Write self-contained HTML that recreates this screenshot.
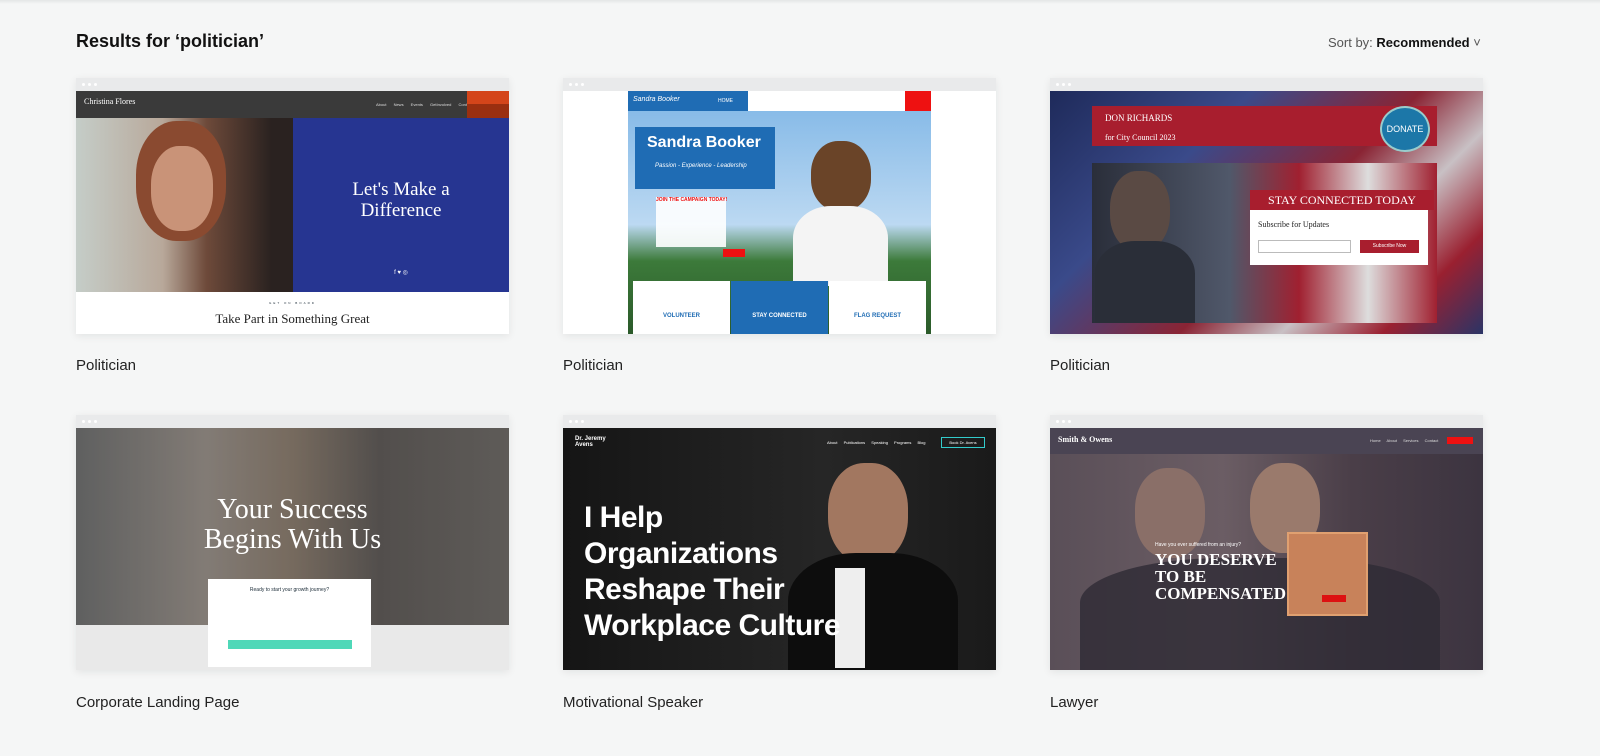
<!DOCTYPE html>
<html><head><meta charset="utf-8"><style>
*{margin:0;padding:0;box-sizing:border-box}
body{width:1600px;height:756px;background:#f5f6f6;font-family:"Liberation Sans",sans-serif;position:relative;overflow:hidden;color:#20303c}
.a{position:absolute}
.card{position:absolute;width:433px;box-shadow:0 2px 8px rgba(0,0,0,.08)}
.bar{height:13px;background:#e9eaeb;position:relative}
.bar i{position:absolute;top:5px;width:3px;height:3px;border-radius:50%;background:#fff}
.img{position:relative;overflow:hidden}
.lbl{position:absolute;font-size:15px;color:#222}
.serif{font-family:"Liberation Serif",serif}
</style></head><body>
<div style="position:absolute;top:0;left:0;width:1600px;height:4px;background:linear-gradient(#e4e6e6,#f5f6f6)"></div>
<div class="a" style="left:76px;top:31px;font-size:18px;font-weight:bold;color:#111">Results for ‘politician’</div>
<div class="a" style="left:1328px;top:35px;font-size:13px;color:#555">Sort by: <b style="color:#111">Recommended</b> ˅</div>

<!-- Card 1 -->
<div class="card" style="left:76px;top:78px"><div class="bar"><i style="left:6px"></i><i style="left:12px"></i><i style="left:18px"></i></div>
<div class="img" style="height:243px;background:#fff">
<div class="a" style="left:0;top:0;width:433px;height:27px;background:#3a3a3a"></div>
<div class="a serif" style="left:8px;top:6px;color:#fff;font-size:8px">Christina Flores</div>
<div class="a" style="left:300px;top:11px;color:#ddd;font-size:4px;word-spacing:6px">About News Events GetInvolved Contact</div>
<div class="a" style="left:391px;top:0;width:42px;height:13px;background:#d4451a"></div>
<div class="a" style="left:391px;top:13px;width:42px;height:14px;background:#9a2f10"></div>
<div class="a" style="left:0;top:27px;width:217px;height:174px;background:linear-gradient(90deg,#c5cdc8,#b8a89a 40%,#6e4a3a 60%,#2a2220 90%)"></div>
<div class="a" style="left:60px;top:30px;width:90px;height:120px;border-radius:45%;background:#8a4a30"></div>
<div class="a" style="left:75px;top:55px;width:62px;height:85px;border-radius:45%;background:#c99378"></div>
<div class="a" style="left:217px;top:27px;width:216px;height:174px;background:#263591"></div>
<div class="a serif" style="left:217px;top:88px;width:216px;text-align:center;color:#fff;font-size:19px;line-height:21px">Let's Make a<br>Difference</div>
<div class="a" style="left:217px;top:178px;width:216px;text-align:center;color:#fff;font-size:6px">f ♥ ◎</div>
<div class="a" style="left:0;top:210px;width:433px;text-align:center;font-size:3px;letter-spacing:2px">GET ON BOARD</div>
<div class="a serif" style="left:0;top:220px;width:433px;text-align:center;font-size:13px;color:#222">Take Part in Something Great</div>
</div></div>
<div class="lbl" style="left:76px;top:357px">Politician</div>

<!-- Card 2 -->
<div class="card" style="left:563px;top:78px"><div class="bar"><i style="left:6px"></i><i style="left:12px"></i><i style="left:18px"></i></div>
<div class="img" style="height:243px;background:#fff">
<div class="a" style="left:65px;top:0;width:303px;height:243px;background:linear-gradient(#7fb6e6,#bcd9f2 55%,#3c7a3a 70%,#2b5a2a)"></div>
<div class="a" style="left:65px;top:0;width:303px;height:20px;background:#1f6cb4"></div>
<div class="a" style="left:140px;top:0;width:228px;height:20px;background:#fff"></div>
<div class="a" style="left:342px;top:0;width:26px;height:20px;background:#e11"></div>
<div class="a" style="left:140px;top:0;width:45px;height:20px;background:#1f6cb4;color:#fff;font-size:5px;text-align:center;line-height:20px">HOME</div>
<div class="a" style="left:70px;top:5px;color:#fff;font-size:7px;font-style:italic">Sandra Booker</div>
<div class="a" style="left:72px;top:36px;width:140px;height:62px;background:#1f6cb4"></div>
<div class="a" style="left:84px;top:43px;color:#fff;font-size:16px;font-weight:bold">Sandra Booker</div>
<div class="a" style="left:92px;top:72px;color:#fff;font-size:6px;font-style:italic">Passion - Experience - Leadership</div>
<div class="a" style="left:93px;top:106px;width:70px;height:50px;background:#fff;opacity:.9"></div>
<div class="a" style="left:93px;top:106px;color:#e11;font-size:5px;font-weight:bold">JOIN THE CAMPAIGN TODAY!</div>
<div class="a" style="left:160px;top:158px;width:22px;height:8px;background:#e11"></div>
<div class="a" style="left:248px;top:50px;width:60px;height:70px;border-radius:45%;background:#6a4428"></div>
<div class="a" style="left:230px;top:115px;width:95px;height:80px;border-radius:40% 40% 0 0;background:#f4f4f4"></div>
<div class="a" style="left:70px;top:190px;width:97px;height:53px;background:#fff"></div>
<div class="a" style="left:168px;top:190px;width:97px;height:53px;background:#1f6cb4"></div>
<div class="a" style="left:266px;top:190px;width:97px;height:53px;background:#fff"></div>
<div class="a" style="left:70px;top:222px;width:97px;text-align:center;color:#1f6cb4;font-size:6px;font-weight:bold">VOLUNTEER</div>
<div class="a" style="left:168px;top:222px;width:97px;text-align:center;color:#fff;font-size:6px;font-weight:bold">STAY CONNECTED</div>
<div class="a" style="left:266px;top:222px;width:97px;text-align:center;color:#1f6cb4;font-size:6px;font-weight:bold">FLAG REQUEST</div>
</div></div>
<div class="lbl" style="left:563px;top:357px">Politician</div>

<!-- Card 3 -->
<div class="card" style="left:1050px;top:78px"><div class="bar"><i style="left:6px"></i><i style="left:12px"></i><i style="left:18px"></i></div>
<div class="img" style="height:243px;background:linear-gradient(135deg,#1e2a5a,#3a4a8a 30%,#8a2434 55%,#c8c0c4 70%,#9a2030 85%,#2a3466)">
<div class="a" style="left:42px;top:15px;width:345px;height:40px;background:#a81e2e"></div>
<div class="a serif" style="left:55px;top:22px;color:#fff;font-size:9px">DON RICHARDS</div>
<div class="a serif" style="left:55px;top:42px;color:#fff;font-size:8px">for City Council 2023</div>
<div class="a" style="left:330px;top:15px;width:50px;height:46px;border-radius:50%;background:#1c77a8;border:2px solid #9cc;color:#fff;font-size:9px;text-align:center;line-height:42px">DONATE</div>
<div class="a" style="left:42px;top:72px;width:345px;height:160px;background:linear-gradient(90deg,#2a2e3a,#50586a 40%,#a02030 60%,#ddd 80%,#a02030)"></div>
<div class="a" style="left:60px;top:80px;width:60px;height:80px;border-radius:45%;background:#5a4a44"></div>
<div class="a" style="left:45px;top:150px;width:100px;height:82px;border-radius:40% 40% 0 0;background:#2a2e38"></div>
<div class="a" style="left:200px;top:99px;width:184px;height:20px;background:#a81e2e;color:#fff;font-size:12px;text-align:center;line-height:20px" class="serif"><span class="serif">STAY CONNECTED TODAY</span></div>
<div class="a" style="left:200px;top:119px;width:178px;height:55px;background:#fff"></div>
<div class="a serif" style="left:208px;top:129px;font-size:8px;color:#222">Subscribe for Updates</div>
<div class="a" style="left:208px;top:149px;width:93px;height:13px;border:1px solid #bbb"></div>
<div class="a" style="left:310px;top:149px;width:59px;height:13px;background:#a81e2e;color:#fff;font-size:5px;text-align:center;line-height:13px">Subscribe Now</div>
</div></div>
<div class="lbl" style="left:1050px;top:357px">Politician</div>

<!-- Card 4 -->
<div class="card" style="left:76px;top:415px"><div class="bar"><i style="left:6px"></i><i style="left:12px"></i><i style="left:18px"></i></div>
<div class="img" style="height:242px;background:#e9e9e9">
<div class="a" style="left:0;top:0;width:433px;height:197px;background:linear-gradient(90deg,#6b6c6c,#9a9189 30%,#8a7a6a 50%,#5a5552 70%,#6a6662)"></div>
<div class="a" style="left:0;top:0;width:433px;height:197px;background:rgba(60,60,60,.25)"></div>
<div class="a serif" style="left:0;top:67px;width:433px;text-align:center;color:#fff;font-size:28px;line-height:30px">Your Success<br>Begins With Us</div>
<div class="a" style="left:132px;top:151px;width:163px;height:88px;background:#fff"></div>
<div class="a" style="left:132px;top:159px;width:163px;text-align:center;font-size:5px">Ready to start your growth journey?</div>
<div class="a" style="left:152px;top:212px;width:124px;height:9px;background:#4fd8b8"></div>
</div></div>
<div class="lbl" style="left:76px;top:694px">Corporate Landing Page</div>

<!-- Card 5 -->
<div class="card" style="left:563px;top:415px"><div class="bar"><i style="left:6px"></i><i style="left:12px"></i><i style="left:18px"></i></div>
<div class="img" style="height:242px;background:linear-gradient(90deg,#151515,#262626 60%,#1a1a1a)">
<div class="a" style="left:12px;top:8px;color:#fff;font-size:6px;font-weight:bold">Dr. Jeremy<br>Avens</div>
<div class="a" style="left:264px;top:12px;color:#fff;font-size:4px;word-spacing:5px">About Publications Speaking Programs Blog</div>
<div class="a" style="left:378px;top:9px;width:44px;height:11px;border:1px solid #3cc;color:#fff;font-size:4px;text-align:center;line-height:10px">Book Dr. Avens</div>
<div class="a" style="left:265px;top:35px;width:80px;height:100px;border-radius:45%;background:#a27760"></div>
<div class="a" style="left:225px;top:125px;width:170px;height:120px;border-radius:40% 40% 0 0;background:#0d0d0d"></div>
<div class="a" style="left:272px;top:140px;width:30px;height:100px;background:#eee"></div>
<div class="a" style="left:21px;top:72px;color:#fff;font-size:30px;font-weight:bold;line-height:36px;letter-spacing:-.5px">I Help<br>Organizations<br>Reshape Their<br>Workplace Culture</div>
</div></div>
<div class="lbl" style="left:563px;top:694px">Motivational Speaker</div>

<!-- Card 6 -->
<div class="card" style="left:1050px;top:415px"><div class="bar"><i style="left:6px"></i><i style="left:12px"></i><i style="left:18px"></i></div>
<div class="img" style="height:242px;background:linear-gradient(90deg,#5a4f58,#6b5d64 40%,#4a3e48 70%,#3c3440)">
<div class="a" style="left:0;top:0;width:433px;height:26px;background:#4a4453"></div>
<div class="a serif" style="left:8px;top:7px;color:#fff;font-size:8px;font-weight:bold">Smith &amp; Owens</div>
<div class="a" style="left:320px;top:10px;color:#ddd;font-size:4px;word-spacing:5px">Home About Services Contact</div>
<div class="a" style="left:397px;top:9px;width:26px;height:7px;background:#e11"></div>
<div class="a" style="left:85px;top:40px;width:70px;height:90px;border-radius:45%;background:#8a6f68"></div>
<div class="a" style="left:200px;top:35px;width:70px;height:90px;border-radius:45%;background:#9a7a6c"></div>
<div class="a" style="left:30px;top:130px;width:360px;height:112px;background:#2e2a34;border-radius:40% 40% 0 0;opacity:.8"></div>
<div class="a" style="left:105px;top:114px;color:#fff;font-size:5px">Have you ever suffered from an injury?</div>
<div class="a serif" style="left:105px;top:123px;color:#fff;font-size:17px;font-weight:bold;line-height:17px">YOU DESERVE<br>TO BE<br>COMPENSATED</div>
<div class="a" style="left:237px;top:104px;width:81px;height:84px;background:#c8825a;border:2px solid #e0a070"></div>
<div class="a" style="left:272px;top:167px;width:24px;height:7px;background:#d11"></div>
</div></div>
<div class="lbl" style="left:1050px;top:694px">Lawyer</div>
</body></html>
